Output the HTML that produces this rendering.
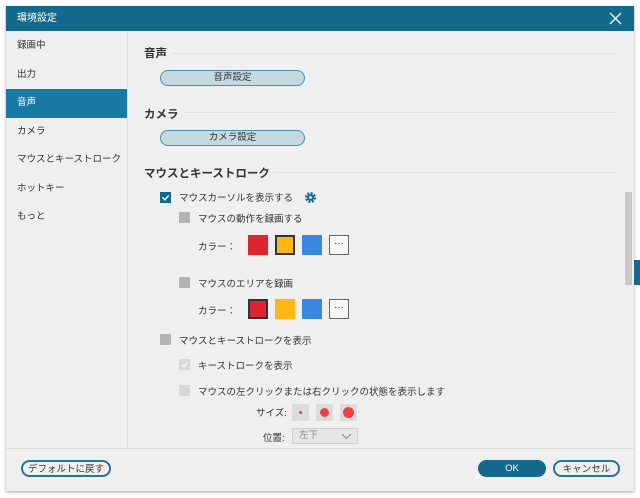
<!DOCTYPE html>
<html><head><meta charset="utf-8"><style>
*{margin:0;padding:0;box-sizing:border-box}
body{width:640px;height:498px;background:#fff;position:relative;overflow:hidden;font-family:"Liberation Sans","Noto Sans CJK JP",sans-serif;font-size:9.5px;color:#333}
.dlg{position:absolute;left:6px;top:6px;width:628px;height:485px;background:#efefef;box-shadow:0 1px 3px rgba(0,0,0,.35)}
.title{position:absolute;left:0;top:0;width:628px;height:25px;background:#13698c;color:#fff;font-size:10px;line-height:25px;padding-left:11px}
.x{position:absolute;right:12px;top:6px}
.side{position:absolute;left:0;top:26px;width:122px;height:416px;border-right:1px solid #ddd}
.side div{height:28.5px;line-height:28px;padding-left:11px;font-size:9.5px;color:#333}
.side .on{background:#1a7aa6;color:#fff}
.a{position:absolute;white-space:nowrap}
.h{font-size:11.5px;font-weight:bold;color:#333}
.line{position:absolute;height:1px;background:#e0e0e0}
.pb{position:absolute;height:16px;border:1px solid #4b8fb0;border-radius:8px;background:#c5d9e1;text-align:center;font-size:9.5px;line-height:14px;color:#333}
.cb{position:absolute;width:11px;height:11px;background:#b4b4b4}
.sw{position:absolute;width:20px;height:20px}
.foot{position:absolute;left:0;top:442px;width:628px;height:1px;background:#ddd}
.ob{position:absolute;height:17px;border-radius:9px;text-align:center;line-height:15px;font-size:9.5px}
.sz{position:absolute;width:17px;height:17px;background:#dcdcdc;border-radius:2px}
.sz i{position:absolute;background:#f04040;border-radius:50%}
</style></head><body>
<div class="dlg">
<div class="title">環境設定<svg class="x" width="13" height="13" viewBox="0 0 13 13"><path d="M1 1L12 12M12 1L1 12" stroke="#fff" stroke-width="1.3"/></svg></div>
<div class="side"><div>録画中</div><div>出力</div><div class="on">音声</div><div>カメラ</div><div>マウスとキーストローク</div><div>ホットキー</div><div>もっと</div></div>
<div class="foot"></div>
<div class="ob" style="left:15px;top:454px;width:90px;border:2px solid #2a7196;color:#333">デフォルトに戻す</div>
<div class="ob" style="left:472px;top:454px;width:68px;background:#13698c;color:#fff;line-height:17px">OK</div>
<div class="ob" style="left:547px;top:454px;width:67px;border:2px solid #2a7196;color:#333">キャンセル</div>
</div>
<div class="a h" style="left:144px;top:45px">音声</div><div class="line" style="left:172px;top:53px;width:444px"></div>
<div class="pb" style="left:160px;top:70px;width:145px">音声設定</div>
<div class="a h" style="left:144px;top:106px">カメラ</div><div class="line" style="left:183px;top:112px;width:433px"></div>
<div class="pb" style="left:160px;top:130px;width:145px">カメラ設定</div>
<div class="a h" style="left:144px;top:165px">マウスとキーストローク</div><div class="line" style="left:274px;top:172px;width:342px"></div>
<div class="cb" style="left:160px;top:192px;background:#13698c"><svg width="11" height="11"><path d="M2.5 5.5L4.8 7.8L8.7 3.5" stroke="#fff" stroke-width="1.5" fill="none"/></svg></div>
<div class="a" style="left:179px;top:190px">マウスカーソルを表示する</div>
<svg class="a" style="left:304px;top:191px" width="13" height="13" viewBox="0 0 13 13"><circle cx="6.5" cy="6.5" r="4.2" fill="none" stroke="#13698c" stroke-width="2.6" stroke-dasharray="2 1.3"/><circle cx="6.5" cy="6.5" r="3.3" fill="#13698c"/><circle cx="6.5" cy="6.5" r="1.4" fill="#fff"/></svg>
<div class="cb" style="left:179px;top:212px"></div><div class="a" style="left:198px;top:211px">マウスの動作を録画する</div>
<div class="a" style="left:198px;top:239px">カラー：</div>
<div class="sw" style="left:248px;top:235px;background:#dd2430"></div>
<div class="sw" style="left:275px;top:235px;background:#fdb614;border:2px solid #333"></div>
<div class="sw" style="left:302px;top:235px;background:#3a88e3"></div>
<div class="sw" style="left:329px;top:235px;border:1px solid #666;background:#f7f7f7;text-align:center;line-height:15px;font-size:10px">···</div>
<div class="cb" style="left:179px;top:277px"></div><div class="a" style="left:198px;top:276px">マウスのエリアを録画</div>
<div class="a" style="left:198px;top:303px">カラー：</div>
<div class="sw" style="left:248px;top:299px;background:#dd2430;border:2px solid #333"></div>
<div class="sw" style="left:275px;top:299px;background:#fdb614"></div>
<div class="sw" style="left:302px;top:299px;background:#3a88e3"></div>
<div class="sw" style="left:329px;top:299px;border:1px solid #666;background:#f7f7f7;text-align:center;line-height:15px;font-size:10px">···</div>
<div class="cb" style="left:160px;top:334px"></div><div class="a" style="left:179px;top:333px">マウスとキーストロークを表示</div>
<div class="cb" style="left:179px;top:359px;background:#d8d8d8"><svg width="11" height="11"><path d="M2.5 5.5L4.8 7.8L8.7 3.5" stroke="#f4f4f4" stroke-width="1.5" fill="none"/></svg></div>
<div class="a" style="left:198px;top:358px">キーストロークを表示</div>
<div class="cb" style="left:179px;top:385px;background:#d8d8d8"></div>
<div class="a" style="left:198px;top:384px">マウスの左クリックまたは右クリックの状態を表示します</div>
<div class="a" style="left:256px;top:405px">サイズ:</div>
<div class="sz" style="left:292px;top:404px"><i style="left:7px;top:7px;width:3px;height:3px"></i></div>
<div class="sz" style="left:316px;top:404px"><i style="left:4px;top:4px;width:9px;height:9px"></i></div>
<div class="sz" style="left:340px;top:404px"><i style="left:3px;top:3px;width:11px;height:11px"></i></div>
<div class="a" style="left:263px;top:430px">位置:</div>
<div class="a" style="left:292px;top:428px;width:66px;height:16px;border:1px solid #d0d0d0;background:#e6e6e6;color:#888;padding-left:6px;line-height:14px">左下<svg style="position:absolute;right:5px;top:4px" width="11" height="7"><path d="M1 1L5.5 5.5L10 1" stroke="#888" fill="none"/></svg></div>
<div class="a" style="left:625px;top:192px;width:7px;height:93px;background:#c8c8c8"></div>
<div class="a" style="left:634px;top:260px;width:6px;height:25px;background:#13698c"></div>
</body></html>
